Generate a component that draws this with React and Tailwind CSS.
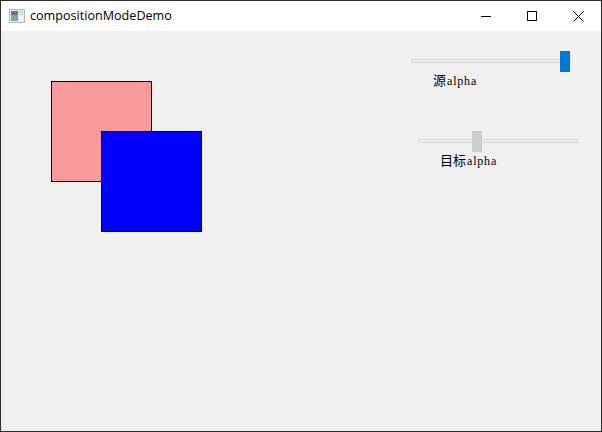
const labelFont = "font-['Liberation_Serif','Noto_Sans_CJK_SC',serif] text-[12px] tracking-[0.8px] leading-[14px] text-black";

const Slider = ({ handle, active, className }) => {
  return (
    <div className={`relative h-[21px] w-[160px] pt-[8px] ${className}`}>
      <div className="h-[4px] w-full border border-[#d9dbd9] bg-[#ececec]"></div>
      <div className={`absolute top-0 h-[21px] w-[10px] ${active ? "bg-[#0078d7]" : "bg-[#cccccc]"}`} style={{ left: handle }}></div>
    </div>
  );
};

const App = () => {
  return (
    <div className="flex h-[432px] w-[602px] flex-col overflow-hidden border border-[#2e2e2e] bg-[#f0f0f0]">
      <div className="flex h-[30px] items-center bg-white">
        <svg width="16" height="16" viewBox="0 0 16 16" className="ml-[8px]">
          <rect x="0.5" y="1.5" width="15" height="13" fill="#e8ecee" stroke="#b4b8ba" />
          <rect x="2" y="3" width="7" height="10" fill="#7fa8a0" />
          <rect x="2" y="3" width="7" height="4" fill="#4f7f92" />
          <rect x="10" y="3" width="4" height="4" fill="#d5dcde" />
          <rect x="10" y="8" width="4" height="5" fill="#f6f7f7" />
        </svg>
        <span className="ml-[5px] font-['Open_Sans',sans-serif] text-[12.6px] text-black">compositionModeDemo</span>
        <div className="ml-auto flex h-full">
          <div className="flex w-[46px] items-center justify-center">
            <svg width="10" height="10" viewBox="0 0 10 10"><path d="M0 5.5H10" stroke="#000" /></svg>
          </div>
          <div className="flex w-[46px] items-center justify-center">
            <svg width="10" height="10" viewBox="0 0 10 10"><rect x="0.5" y="0.5" width="9" height="9" fill="none" stroke="#000" /></svg>
          </div>
          <div className="flex w-[46px] items-center justify-center">
            <svg width="11" height="11" viewBox="0 0 11 11"><path d="M0.5 0.5L10.5 10.5M10.5 0.5L0.5 10.5" stroke="#000" /></svg>
          </div>
        </div>
      </div>
      <div className="flex flex-1 justify-between">
        <div className="ml-[50px] mt-[50px]">
          <div className="h-[101px] w-[101px] border border-black bg-[#f89a9a]"></div>
          <div className="ml-[50px] -mt-[51px] relative h-[101px] w-[101px] border border-black bg-[#0000ff]"></div>
        </div>
        <div className="mr-[23px] mt-[20px] flex w-[167px] flex-col">
          <Slider handle={149} active />
          <div className={`ml-[22px] mt-[2px] ${labelFont}`}><span className="mr-[1px] text-[13px] tracking-normal">源</span>alpha</div>
          <Slider handle={54} className="ml-[7px] mt-[43px]" />
          <div className={`ml-[29px] mt-[2px] ${labelFont}`}><span className="mr-[1px] text-[13px] tracking-normal">目标</span>alpha</div>
        </div>
      </div>
    </div>
  );
};

export default App;
